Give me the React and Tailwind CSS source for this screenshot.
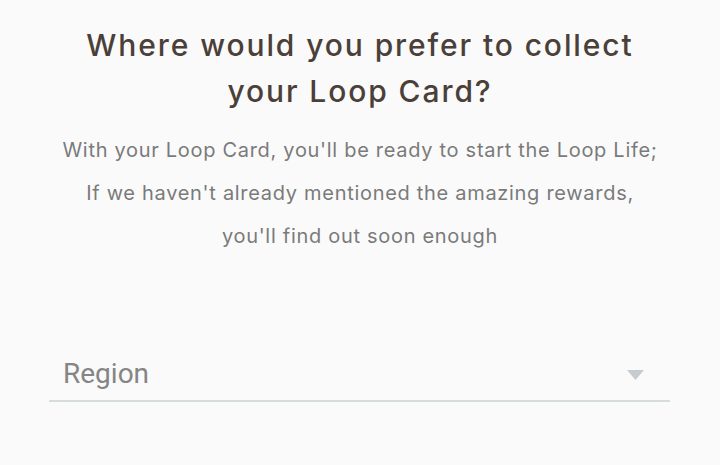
export default function App() {
  return (
    <div className="w-[720px] h-[465px] bg-[#fafafa] overflow-hidden flex flex-col items-center">
      <h1
        className="mt-[22px] text-center text-[30px] leading-[46px] font-medium text-[#4a4039] tracking-[1.9px] whitespace-nowrap"
        style={{ fontFamily: 'Inter, "Noto Sans", sans-serif' }}
      >
        Where would you prefer to collect
        <br />
        your Loop Card?
      </h1>
      <p
        className="mt-[15px] text-center text-[20px] leading-[43px] text-[#7a7a7a] tracking-[0.7px] whitespace-nowrap"
        style={{ fontFamily: 'Inter, "Noto Sans", sans-serif' }}
      >
        With your Loop Card, you'll be ready to start the Loop Life;
        <br />
        If we haven't already mentioned the amazing rewards,
        <br />
        you'll find out soon enough
      </p>
      <div className="mt-[96px] w-[621px] ml-[-1px] border-b-2 border-[#d6dbdc] flex items-center justify-between pl-[14px] pr-[26px] pb-[6px]">
        <span
          className="text-[28px] leading-[40px] text-[#858585]"
          style={{ fontFamily: 'Roboto, sans-serif' }}
        >
          Region
        </span>
        <svg width="17" height="10" viewBox="0 0 17 10" className="mt-[2px]">
          <polygon points="0,0 17,0 8.5,10" fill="#c5cbce" />
        </svg>
      </div>
    </div>
  );
}
